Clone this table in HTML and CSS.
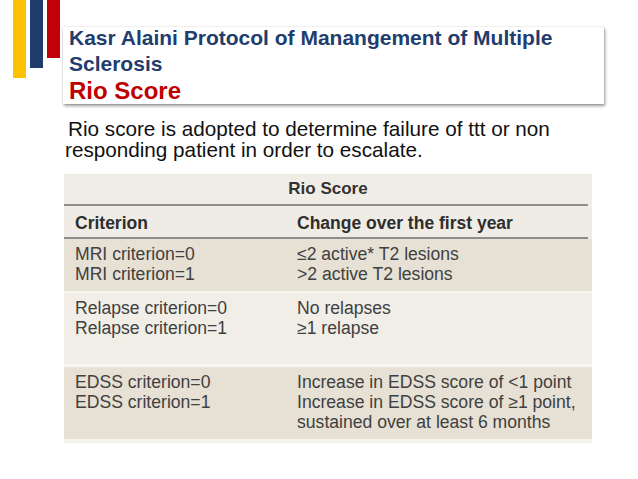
FILE: index.html
```html
<!DOCTYPE html>
<html>
<head>
<meta charset="utf-8">
<link rel="stylesheet" href="styles.css">
</head>
<body>
<div class="slide">
  <header class="top">
    <div class="bars">
      <span class="bar bar-yellow"></span>
      <span class="bar bar-blue"></span>
      <span class="bar bar-red"></span>
    </div>
    <div class="titlebox">
      <h1 class="title">Kasr Alaini Protocol of Manangement of Multiple Sclerosis</h1>
      <h2 class="subtitle">Rio Score</h2>
    </div>
  </header>
  <p class="intro">Rio score is adopted to determine failure of ttt or non responding patient in order to escalate.</p>
  <div class="rio">
    <div class="rio-caption">Rio Score</div>
    <div class="rule"></div>
    <div class="rio-head">
      <div class="col1">Criterion</div>
      <div class="col2">Change over the first year</div>
    </div>
    <div class="rule"></div>
    <div class="row row-dark">
      <div class="col1">MRI criterion=0<br>MRI criterion=1</div>
      <div class="col2">≤2 active* T2 lesions<br>&gt;2 active T2 lesions</div>
    </div>
    <div class="gap"></div>
    <div class="row row-light row-tall">
      <div class="col1">Relapse criterion=0<br>Relapse criterion=1</div>
      <div class="col2">No relapses<br>≥1 relapse</div>
    </div>
    <div class="gap gap-wide"></div>
    <div class="row row-dark">
      <div class="col1">EDSS criterion=0<br>EDSS criterion=1</div>
      <div class="col2">Increase in EDSS score of &lt;1 point<br>Increase in EDSS score of ≥1 point,<br>sustained over at least 6 months</div>
    </div>
    <div class="gap gap-end"></div>
  </div>
</div>
</body>
</html>
```

FILE: styles.css
```css
html, body {
  margin: 0;
  padding: 0;
  background: #ffffff;
}

.slide {
  width: 638px;
  height: 479px;
  font-family: "Liberation Sans", Arial, sans-serif;
  overflow: hidden;
}

.top {
  display: flex;
  align-items: flex-start;
  padding-left: 13px;
}

.bars {
  display: flex;
  align-items: flex-start;
  gap: 4px;
}

.bar {
  display: block;
  width: 13px;
}

.bar-yellow {
  height: 78px;
  background: #fbc102;
}

.bar-blue {
  height: 68px;
  background: #1f3c6d;
}

.bar-red {
  height: 58px;
  background: #c0000a;
}

.titlebox {
  margin-top: 27px;
  margin-left: 3px;
  width: 541px;
  height: 77px;
  box-sizing: border-box;
  padding-left: 6px;
  background: #ffffff;
  box-shadow: 0 0 1px rgba(0, 0, 0, 0.25), 1px 2px 3px rgba(0, 0, 0, 0.4);
}

.title {
  margin: -2px 0 0;
  font-size: 21px;
  line-height: 26px;
  font-weight: bold;
  color: #1f3d6d;
}

.subtitle {
  margin: 0;
  font-size: 24px;
  line-height: 27px;
  font-weight: bold;
  color: #c00000;
}

.intro {
  margin: 14px 0 0;
  padding-left: 65px;
  width: 530px;
  font-size: 20.7px;
  line-height: 21px;
  color: #111111;
  text-indent: 3px;
}

.rio {
  margin: 14px 0 0 64px;
  width: 528px;
  color: #404040;
  font-size: 17.6px;
  line-height: 20px;
}

.rio-caption {
  height: 30px;
  line-height: 30px;
  text-align: center;
  font-weight: bold;
  font-size: 17px;
  color: #333333;
  background: #f0ede6;
}

.rule {
  height: 2px;
  background: #f0ede6;
  border-right: 4px solid #f0ede6;
  box-sizing: border-box;
  position: relative;
}

.rule::before {
  content: "";
  display: block;
  height: 2px;
  margin-right: 0;
  background: #8f8d87;
}

.rio-head {
  display: flex;
  height: 31px;
  box-sizing: border-box;
  padding-top: 3px;
  line-height: 28px;
  font-weight: bold;
  font-size: 17.5px;
  color: #2e2e2e;
  background: #efece5;
}

.col1 {
  width: 233px;
  padding-left: 11px;
  box-sizing: border-box;
  flex: none;
}

.col2 {
  flex: 1;
}

.row {
  display: flex;
  padding: 5px 0 7px;
}

.row-dark {
  background: #e6e1d4;
}

.row-light {
  background: #f1eee8;
}

.row-tall {
  padding-bottom: 26px;
}

.gap {
  height: 2px;
  background: #f8f6f1;
}

.gap-wide {
  height: 3px;
}

.gap-end {
  height: 4px;
  background: #f5f3ee;
}
```
